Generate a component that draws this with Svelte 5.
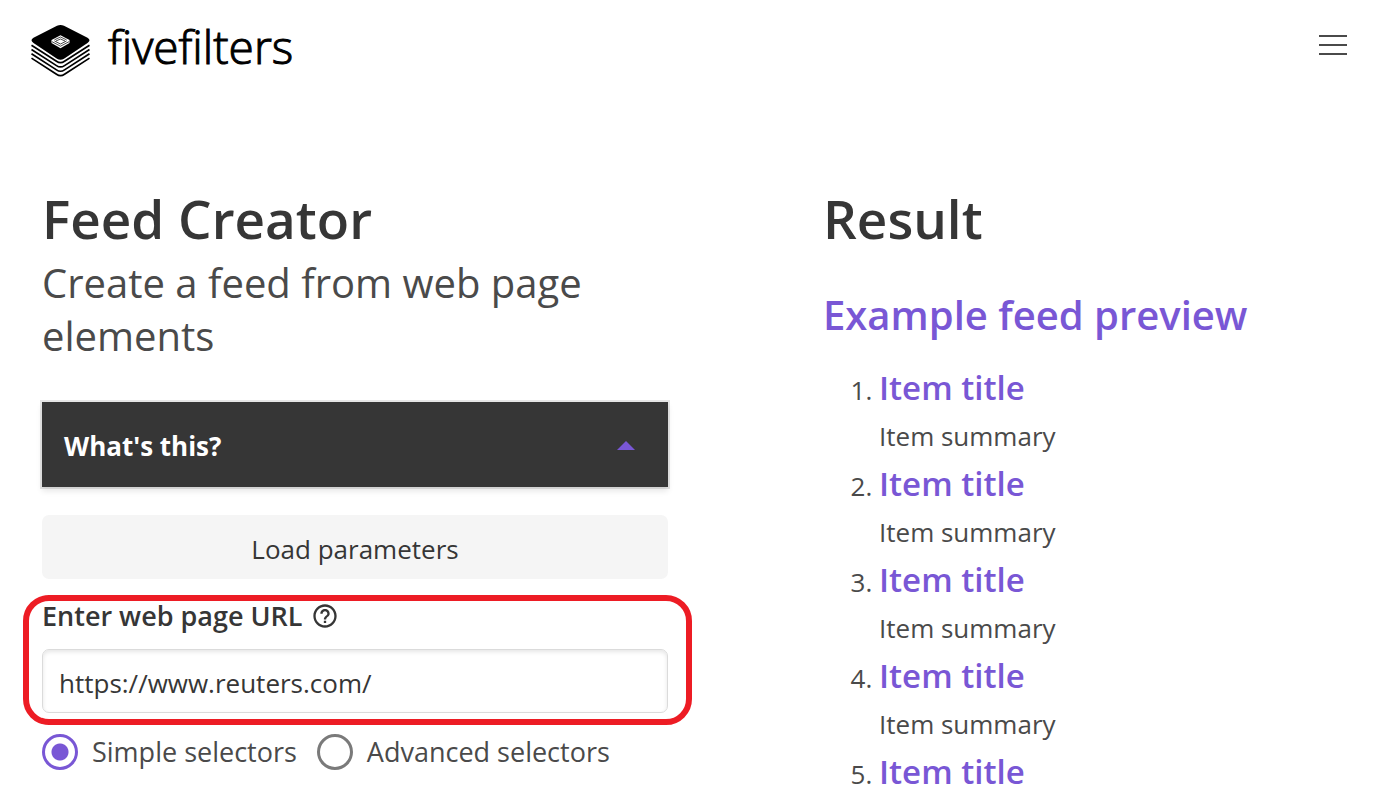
<script>
  const items = [
    { title: 'Item title', summary: 'Item summary' },
    { title: 'Item title', summary: 'Item summary' },
    { title: 'Item title', summary: 'Item summary' },
    { title: 'Item title', summary: 'Item summary' },
    { title: 'Item title' }
  ];
  let url = $state('https://www.reuters.com/');
  let mode = $state('simple');
</script>

<header class="navbar">
  <a class="brand" href="/">
    <svg class="mark" viewBox="0 0 60 54" aria-hidden="true">
      <path d="M27 1.800Q30.500 0 34 1.800L57.500 13.700Q61.500 16.200 57.500 19L34 34.700Q30.500 36.800 27 34.700L3.500 19Q-.5 16.200 3.500 13.700Z" />
      <g fill="none" stroke="#000" stroke-width="1.700">
        <path d="M1.500 21.200L26.500 37.300Q30.500 40 34.500 37.300L59.500 21.200" />
        <path d="M1.500 25.500L26.500 41.600Q30.500 44.300 34.500 41.600L59.500 25.500" />
        <path d="M1.500 29.800L26.500 45.900Q30.500 48.600 34.500 45.900L59.500 29.800" />
        <path d="M1.500 34.100L26.500 50.200Q30.500 52.900 34.500 50.200L59.500 34.100" />
      </g>
      <path fill="#fff" d="M30.500 11.300L39.500 15.900V18.900L30.500 24.300L21.500 18.900V15.900Z" />
      <g fill="none" stroke="#000" stroke-width=".7">
        <path d="M24.500 15.800L30.500 13L36.500 15.800" />
        <path d="M26 17L30.500 15L35 17" />
        <path d="M24.500 17L30.500 20L36.500 17" />
        <path d="M22 17.700L30.500 22.200L39 17.700" />
      </g>
    </svg>
    <span class="wordmark">fivefilters</span>
  </a>
  <button class="burger" type="button" aria-label="Menu">
    <span></span><span></span><span></span>
  </button>
</header>

<main class="columns">
  <section>
    <h1>Feed Creator</h1>
    <p class="subtitle">Create a feed from web page elements</p>

    <button class="about" type="button">
      What's this?
      <svg class="caret" viewBox="0 0 18 9" aria-hidden="true"><path d="M9 0L18 9H0Z" /></svg>
    </button>

    <button class="load" type="button">Load parameters</button>

    <div class="field">
      <div class="label-row">
        <label for="url">Enter web page URL</label>
        <svg class="help" viewBox="0 0 24 24" aria-hidden="true">
          <path d="M11 18h2v-2h-2v2zm1-16C6.480 2 2 6.480 2 12s4.480 10 10 10 10-4.480 10-10S17.520 2 12 2zm0 18c-4.410 0-8-3.590-8-8s3.590-8 8-8 8 3.590 8 8-3.590 8-8 8zm0-14c-2.210 0-4 1.790-4 4h2c0-1.100.9-2 2-2s2 .9 2 2c0 2-3 1.750-3 5h2c0-2.250 3-2.500 3-5 0-2.210-1.790-4-4-4z" />
        </svg>
      </div>
      <input id="url" class="text" type="text" bind:value={url} />
    </div>

    <div class="modes">
      <label><input type="radio" name="mode" value="simple" bind:group={mode} />Simple selectors</label>
      <label><input type="radio" name="mode" value="advanced" bind:group={mode} />Advanced selectors</label>
    </div>
  </section>

  <section>
    <h1>Result</h1>
    <h2><a href="#preview">Example feed preview</a></h2>
    <ol>
      {#each items as item}
        <li>
          <a class="item-title" href="#item">{item.title}</a>
          {#if item.summary}<p>{item.summary}</p>{/if}
        </li>
      {/each}
    </ol>
  </section>
</main>

<style>
  :global(body) {
    margin: 0;
    background: #fff;
    color: #4a4a4a;
    font: 26px/48px 'Open Sans', 'Noto Sans', sans-serif;
  }
  :global(*) {
    box-sizing: border-box;
  }
  a {
    color: #7957d5;
    text-decoration: none;
  }
  button,
  input {
    font: inherit;
  }
  h1,
  h2,
  p,
  ol {
    margin: 0;
  }
  .navbar {
    display: flex;
    justify-content: space-between;
    align-items: center;
    height: 90px;
    padding: 0 16px 0 30px;
  }
  .brand {
    display: flex;
    align-items: center;
    gap: 18px;
    color: #000;
  }
  .mark {
    width: 60px;
    height: 54px;
    margin-top: 12px;
  }
  .wordmark {
    margin-top: 2px;
    font: 300 46px/56px 'Open Sans', sans-serif;
    -webkit-text-stroke: 1px #000;
  }
  .burger {
    display: flex;
    flex-direction: column;
    align-items: center;
    gap: 7px;
    padding: 10px 11px;
    border: 0;
    background: none;
  }
  .burger span {
    width: 28px;
    height: 2px;
    background: #4a4a4a;
  }
  .columns {
    display: grid;
    grid-template-columns: 626fr 509fr;
    gap: 155px;
    padding: 97px 42px 0;
  }
  h1 {
    color: #363636;
    font-size: 53px;
    line-height: 64px;
    font-weight: 600;
  }
  .subtitle {
    margin-top: 5px;
    font-size: 40px;
    line-height: 53px;
  }
  .about {
    display: flex;
    justify-content: space-between;
    align-items: center;
    width: 100%;
    height: 85px;
    margin-top: 40px;
    padding: 2px 33px 0 22px;
    border: 0;
    background: #363636;
    box-shadow: 0 4px 6px rgba(10, 10, 10, 0.1), 0 0 0 2px rgba(10, 10, 10, 0.1);
    color: #fff;
    font-weight: 700;
  }
  .caret {
    width: 18px;
    height: 9px;
    fill: #7957d5;
  }
  .load {
    width: 100%;
    height: 64px;
    margin-top: 28px;
    padding: 4px 0 0;
    border: 0;
    border-radius: 7px;
    background: #f5f5f5;
    color: #363636;
  }
  .field {
    position: relative;
    margin-top: 16px;
  }
  .field::after {
    content: '';
    position: absolute;
    inset: 0 -24px -12px -19px;
    border: 6px solid #ed1c24;
    border-radius: 26px;
    pointer-events: none;
  }
  .label-row {
    display: flex;
    align-items: center;
    gap: 8px;
    height: 42px;
    color: #363636;
    font-size: 27px;
    font-weight: 600;
  }
  .help {
    width: 28px;
    height: 28px;
    fill: #363636;
  }
  .text {
    display: block;
    width: 100%;
    height: 64px;
    margin-top: 12px;
    padding: 4px 16px 0;
    border: 1px solid #dbdbdb;
    border-radius: 7px;
    background: #fff;
    box-shadow: inset 0 2px 4px rgba(10, 10, 10, 0.1);
    color: #363636;
    outline: 0;
  }
  .modes {
    display: flex;
    gap: 20px;
    margin-top: 15px;
    font-size: 27px;
  }
  .modes label {
    display: flex;
    align-items: center;
    gap: 14px;
    white-space: nowrap;
  }
  .modes input {
    appearance: none;
    width: 36px;
    height: 36px;
    margin: 0;
    border: 3px solid #7a7a7a;
    border-radius: 50%;
  }
  .modes input:checked {
    border-color: #7957d5;
    background: radial-gradient(circle, #7957d5 8px, transparent 9px);
  }
  h2 {
    margin-top: 32px;
    font-size: 40px;
    line-height: 64px;
    font-weight: 600;
  }
  ol {
    margin-top: 17px;
    padding-left: 56px;
  }
  .item-title {
    display: block;
    font-size: 33px;
    font-weight: 600;
  }
</style>
